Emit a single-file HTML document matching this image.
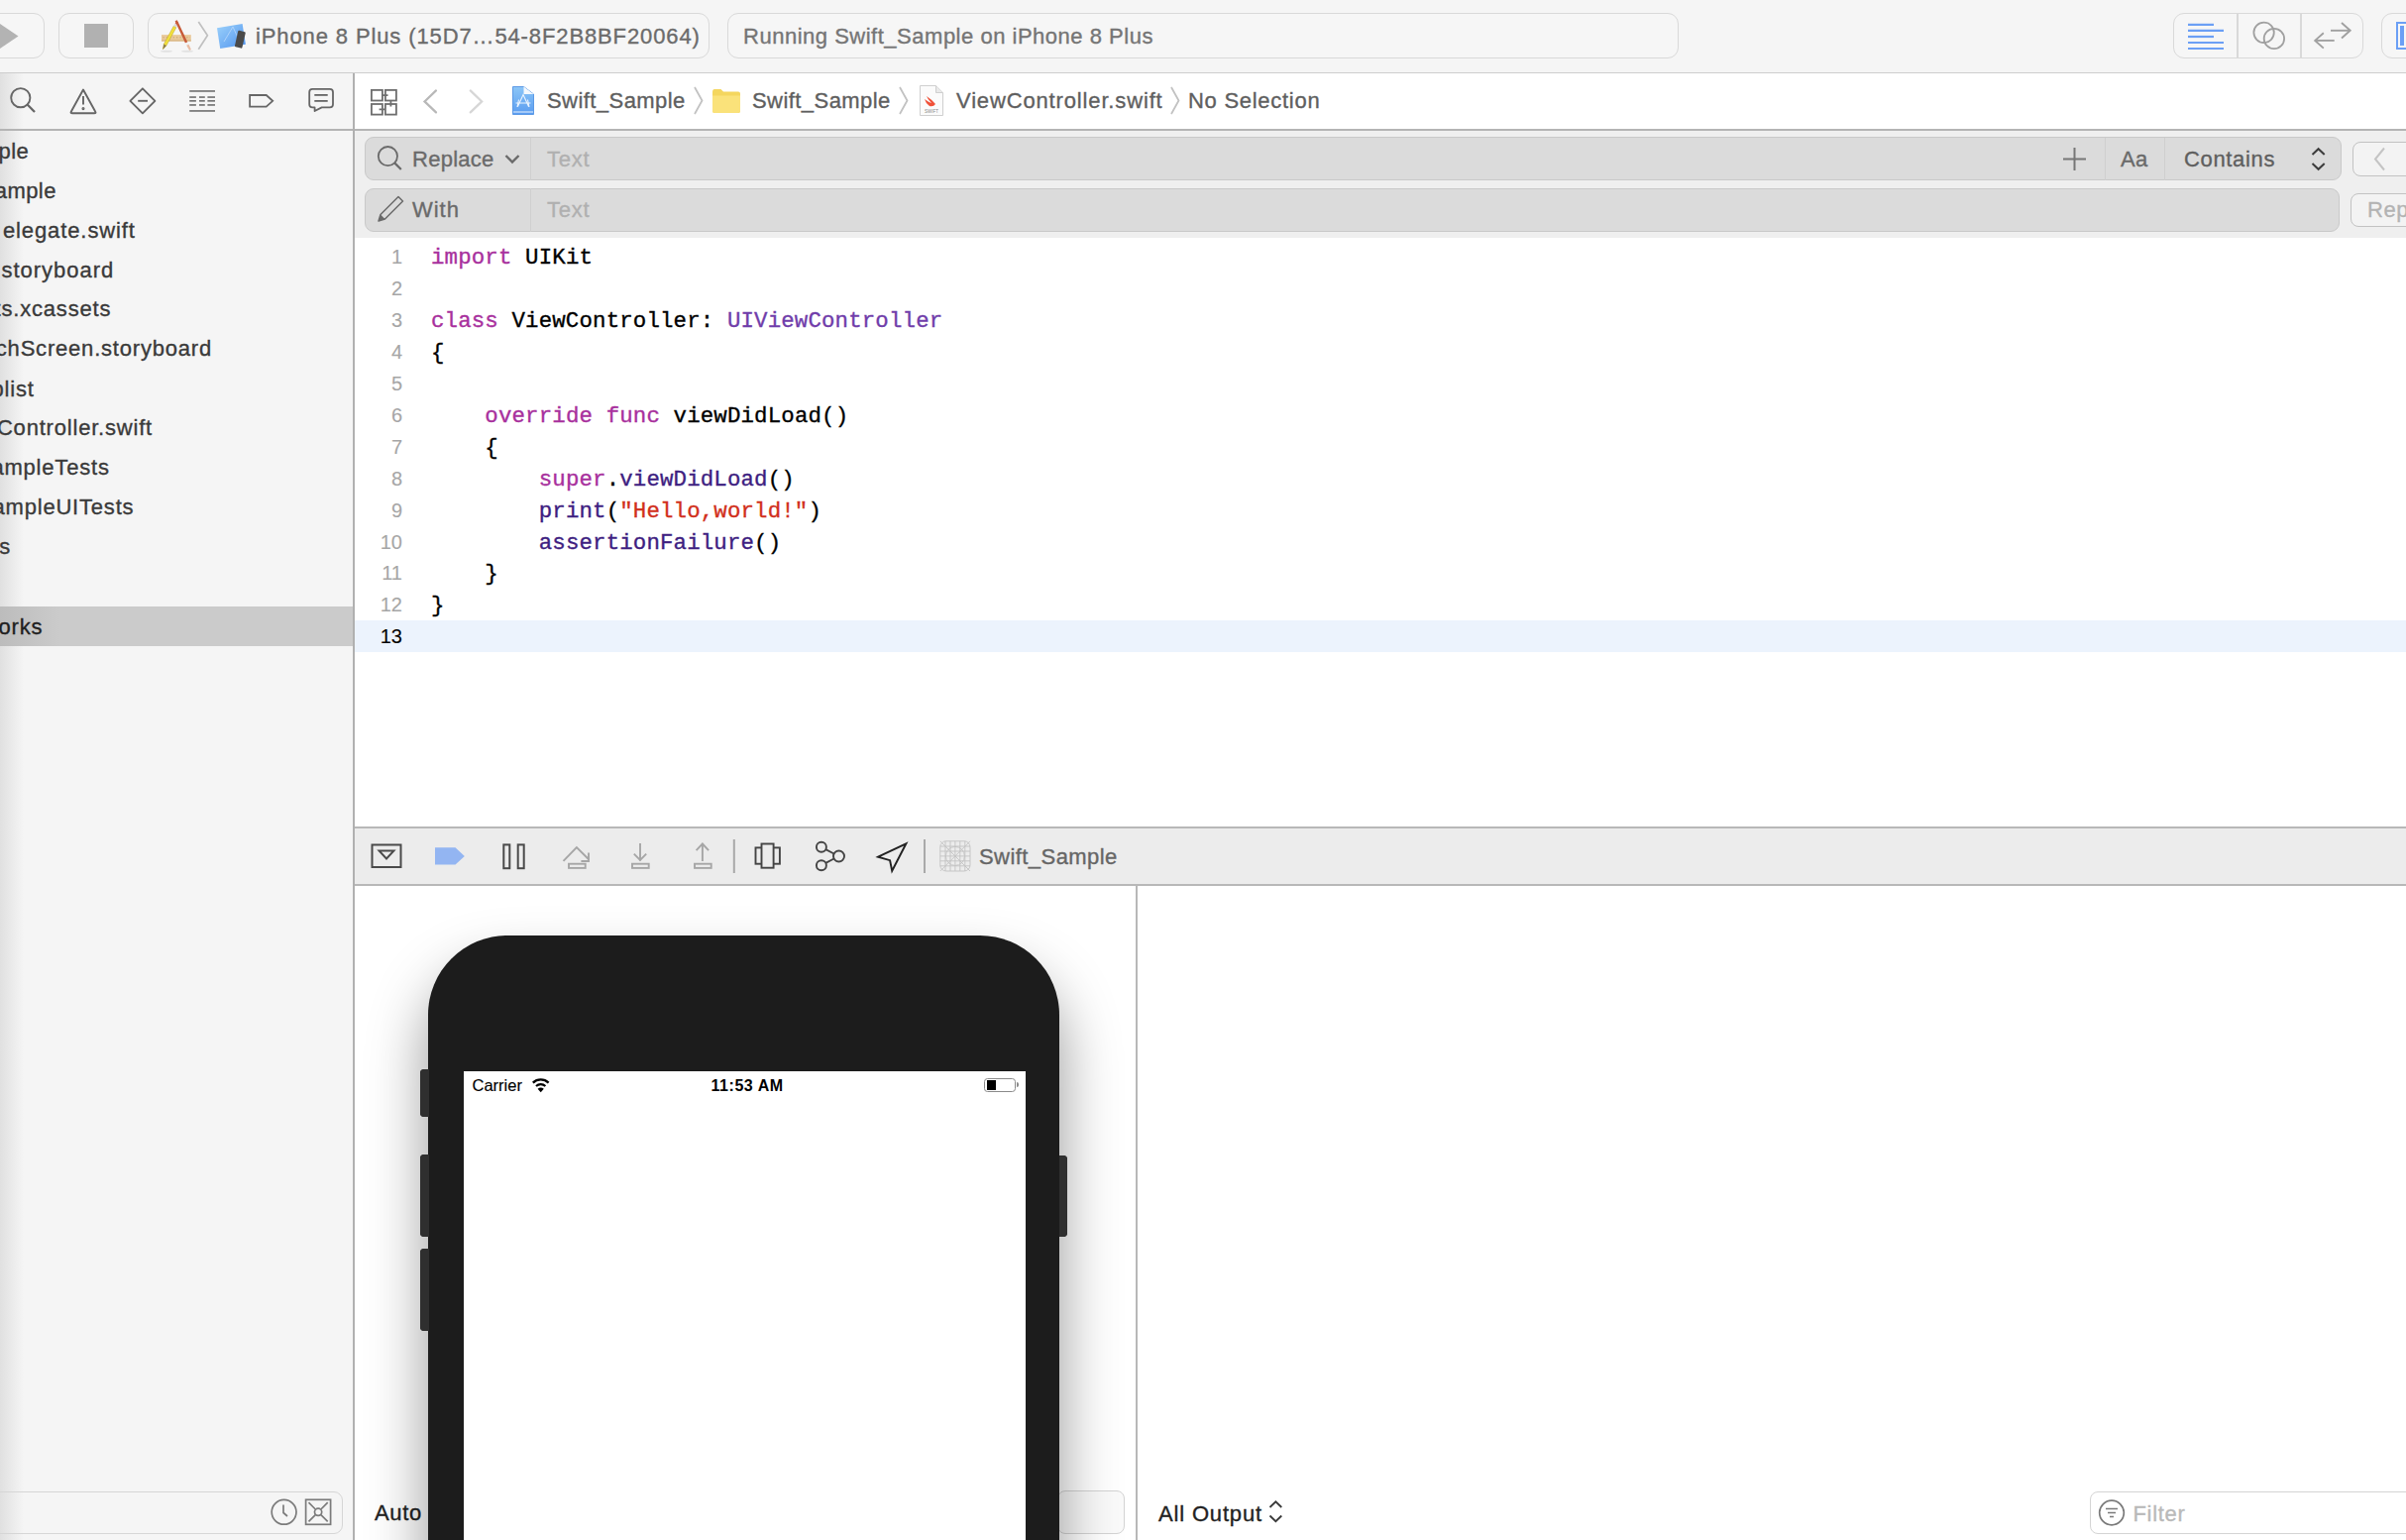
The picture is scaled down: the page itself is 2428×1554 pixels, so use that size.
<!DOCTYPE html>
<html><head><meta charset="utf-8">
<style>
*{box-sizing:border-box;margin:0;padding:0}
html,body{width:2428px;height:1554px;overflow:hidden;background:#fff;font-family:"Liberation Sans",sans-serif}
.a{position:absolute}
.t{position:absolute;white-space:pre;line-height:1;-webkit-text-stroke:0.35px currentColor}
#toolbar{left:0;top:0;width:2428px;height:74px;background:#f5f5f5;border-bottom:1px solid #cdcdcd}
.btn{position:absolute;border:1.5px solid #d9d9d9;border-radius:11px;background:#f6f6f6}
#nav{left:0;top:74px;width:357px;height:1480px;background:#f5f5f5}
#vdiv{left:356px;top:74px;width:2px;height:1480px;background:#b0b0b0}
#navbar{left:0;top:74px;width:357px;height:58px;border-bottom:2px solid #b4b4b4}
#jump{left:358px;top:74px;width:2070px;height:58px;background:#fff;border-bottom:2px solid #b4b4b4}
#find{left:358px;top:132px;width:2070px;height:108px;background:#efefef}
.fld{position:absolute;background:#dbdbdb;border:1px solid #c9c9c9;border-radius:9px}
#code{left:358px;top:240px;width:2070px;height:594px;background:#fff}
#dbg{left:358px;top:834px;width:2070px;height:60px;background:#ececec;border-top:2px solid #b8b8b8;border-bottom:2px solid #b8b8b8}
#vars{left:358px;top:894px;width:789px;height:660px;background:#fff}
#cons{left:1148px;top:894px;width:1280px;height:660px;background:#fff}
#div2{left:1146px;top:894px;width:2px;height:660px;background:#b8b8b8}
.cl{position:absolute;left:0;height:32px;font-family:"Liberation Mono",monospace;font-size:22.4px;white-space:pre;line-height:32px}
.ln{position:absolute;width:48px;left:358px;text-align:right;color:#a3a3a3;font-family:"Liberation Sans",sans-serif;font-size:21px}
.kw{color:#a8309d}.ty{color:#703daa}.fn{color:#3e1e81}.str{color:#d12f1b}
.nf{position:absolute;left:0;font-size:23px;color:#3b3b3b;white-space:pre;line-height:1}
</style></head>
<body>
<!-- TOOLBAR -->
<div id="toolbar" class="a"></div>
<div class="btn" style="left:-20px;top:13px;width:65px;height:46px"></div>
<svg class="a" style="left:0;top:24px" width="20" height="25"><path d="M0 0 L18.5 12.5 L0 25 Z" fill="#b3b3b3"/></svg>
<div class="btn" style="left:59px;top:13px;width:76px;height:46px"></div>
<div class="a" style="left:85px;top:24px;width:24px;height:24px;background:#b1b1b1"></div>
<div class="btn" style="left:149px;top:13px;width:567px;height:46px"></div>
<svg class="a" style="left:160px;top:18px" width="40" height="36">
 <rect x="3" y="17.1" width="29.8" height="6.4" fill="#e9c99b"/>
 <rect x="3" y="22.5" width="29.8" height="1" fill="#d2ad78"/>
 <path d="M4.5 19.8 H32" stroke="#c7a26e" stroke-width="1" stroke-dasharray="1.2 2.2"/>
 <path d="M4.4 31.7 L5.3 26.6 L15.3 8.2 L17.9 9.6 L7.9 28 Z" fill="#f2e03c" stroke="#b9a02a" stroke-width="0.5"/>
 <path d="M4.4 31.7 L5.3 26.6 L7.9 28 Z" fill="#8a7a50"/>
 <path d="M15.3 8.2 L16.7 5.6 L19.3 7 L17.9 9.6 Z" fill="#d9d9d9"/>
 <path d="M16.7 5.6 L17.5 4.2 Q18.8 3.4 20 4.4 L19.3 7 Z" fill="#e8534a"/>
 <path d="M16.6 3.2 L18.8 2.2 L29.3 24.4 L27 25.4 Z" fill="#c75b38"/>
 <path d="M27 25.4 L29.3 24.4 L30.5 26.8 L28.2 27.8 Z" fill="#f2f2f2"/>
 <path d="M28.2 27.8 L30.5 26.8 L32.8 31.8 Q32.3 33 31 32.8 Z" fill="#e9bda4"/>
 <ellipse cx="8" cy="33.8" rx="6" ry="1" fill="#000" opacity=".08"/>
 <ellipse cx="29" cy="33.8" rx="6" ry="1" fill="#000" opacity=".08"/>
</svg>
<svg class="a" style="left:198px;top:20px" width="14" height="32"><path d="M2.3 2 L11.4 15.8 L2.3 29.7" fill="none" stroke="#c0c0c0" stroke-width="1.7"/></svg>
<svg class="a" style="left:216px;top:20px" width="36" height="34">
 <defs><linearGradient id="gdev" x1="0" y1="0" x2="1" y2="1"><stop offset="0" stop-color="#9dd2fb"/><stop offset="1" stop-color="#4f93ee"/></linearGradient></defs>
 <path d="M3 8.3 L28.6 4.1 L31.9 24.7 L6.2 29 Z" fill="url(#gdev)"/>
 <path d="M10 22 L19 7 L24 18" fill="none" stroke="#b9d8fb" stroke-width="1" opacity=".8"/>
 <path d="M24.2 11.5 Q24.5 10.6 25.5 10.8 L31 12.2 Q32 12.5 31.7 13.5 L28.4 27.9 Q28.1 28.9 27.1 28.6 L21.7 27.3 Q20.7 27 21 26 Z" fill="#4a4a4a"/>
</svg>
<div class="t" style="left:258px;top:26px;font-size:22px;color:#6b6b6b;letter-spacing:0.88px">iPhone 8 Plus (15D7…54-8F2B8BF20064)</div>
<div class="btn" style="left:734px;top:13px;width:960px;height:46px"></div>
<div class="t" style="left:750px;top:25.5px;font-size:22px;color:#757575;letter-spacing:0.51px">Running Swift_Sample on iPhone 8 Plus</div>
<div class="btn" style="left:2193px;top:13px;width:192px;height:46px"></div>
<div class="a" style="left:2257px;top:14px;width:2px;height:44px;background:#d9d9d9"></div>
<div class="a" style="left:2321px;top:14px;width:2px;height:44px;background:#d9d9d9"></div>
<svg class="a" style="left:2200px;top:18px" width="50" height="36">
 <g stroke="#6b9ff5" stroke-width="2.2"><path d="M8 6.9 H34"/><path d="M8 12.9 H44"/><path d="M8 19 H34"/><path d="M8 25 H44"/><path d="M8 31 H44"/></g>
</svg>
<svg class="a" style="left:2265px;top:14px" width="50" height="44">
 <circle cx="19.6" cy="18.8" r="10.2" fill="none" stroke="#a0a0a0" stroke-width="1.8"/>
 <circle cx="29.9" cy="25" r="10.2" fill="none" stroke="#a0a0a0" stroke-width="1.8"/>
</svg>
<svg class="a" style="left:2328px;top:14px" width="50" height="44">
 <g fill="none" stroke="#a0a0a0" stroke-width="1.9">
 <path d="M24 16.8 H43.7"/><path d="M35 9 L43.7 16.8 L35 24.5"/>
 <path d="M8.2 26.9 H27.7"/><path d="M16.8 19.2 L8.2 26.9 L16.8 34.6"/>
 </g>
</svg>
<div class="btn" style="left:2403px;top:13px;width:60px;height:46px"></div>
<div class="a" style="left:2418px;top:22px;width:14px;height:28px;border:2.5px solid #6b9ff5"></div>
<div class="a" style="left:2422px;top:26px;width:4px;height:20px;background:#6b9ff5"></div>

<!-- NAVIGATOR -->
<div id="nav" class="a"></div>
<div class="a" style="left:0;top:74px;width:60px;height:1480px;background:linear-gradient(to right,#e0e0e0,rgba(245,245,245,0.5) 40%,rgba(245,245,245,0))"></div>
<div class="a" style="left:0;top:612px;width:357px;height:40px;background:#cbcbcb"></div>
<div class="a" style="left:0;top:612px;width:60px;height:40px;background:linear-gradient(to right,#bcbcbc,rgba(203,203,203,0))"></div>
<div id="navbar" class="a"></div>
<svg class="a" style="left:0;top:74px" width="357" height="58">
 <g fill="none" stroke="#666" stroke-width="1.9">
  <circle cx="20.8" cy="24.7" r="9.6"/><path d="M27.6 31.5 L35 39" stroke-width="2.3"/>
  <path d="M84 16.5 L96 38.2 Q97.5 40.3 95 40.3 H73.2 Q70.6 40.3 72 38.2 Z" stroke-linejoin="round"/>
  <path d="M84 23 V31.5"/><circle cx="84" cy="35.6" r="0.6" fill="#666"/>
  <path d="M143.9 15.3 L156.4 27.8 L143.9 40.3 L131.4 27.8 Z" stroke-linejoin="round"/><path d="M139.2 27.8 H149"/>
 </g>
 <g fill="#666">
  <rect x="191.2" y="17.2" width="25.8" height="1.5"/>
  <rect x="191.2" y="23.3" width="6.7" height="1.5"/><rect x="201" y="23.3" width="5.8" height="1.5"/><rect x="209.4" y="23.3" width="7.6" height="1.5"/>
  <rect x="191.2" y="27.1" width="6.7" height="1.5"/><rect x="201" y="27.1" width="5.8" height="1.5"/><rect x="209.4" y="27.1" width="7.6" height="1.5"/>
  <rect x="191.2" y="31.2" width="6.7" height="1.5"/><rect x="201" y="31.2" width="5.8" height="1.5"/><rect x="209.4" y="31.2" width="7.6" height="1.5"/>
  <rect x="191.2" y="37.2" width="25.8" height="1.5"/>
 </g>
 <g fill="none" stroke="#666" stroke-width="1.8">
  <path d="M252.1 22 H268.7 L275.2 27.8 L268.7 33.6 H252.1 Z"/>
  <path d="M315.3 15.9 H332.8 Q336 15.9 336 19 V31.2 Q336 34.4 332.8 34.4 H324.7 L317.6 38 V34.4 H315.3 Q312.2 34.4 312.2 31.2 V19 Q312.2 15.9 315.3 15.9 Z" stroke-linejoin="round"/>
  <path d="M317.3 21.9 H330.7"/><path d="M317.3 27.9 H330.7"/>
 </g>
</svg>
<div class="a" style="left:0;top:142.0px;width:29.2px;height:30px;overflow:hidden"><div class="t" style="right:0;top:0;font-size:22px;color:#3a3a3a;letter-spacing:0.44px">Swift_Sample</div></div>
<div class="a" style="left:0;top:181.6px;width:56.9px;height:30px;overflow:hidden"><div class="t" style="right:0;top:0;font-size:22px;color:#3a3a3a;letter-spacing:0.44px">Swift_Sample</div></div>
<div class="a" style="left:0;top:222.0px;width:136.9px;height:30px;overflow:hidden"><div class="t" style="right:0;top:0;font-size:22px;color:#3a3a3a;letter-spacing:0.9px">elegate.swift</div></div>
<div class="a" style="left:0;top:261.6px;width:115.2px;height:30px;overflow:hidden"><div class="t" style="right:0;top:0;font-size:22px;color:#3a3a3a;letter-spacing:0.97px">storyboard</div></div>
<div class="a" style="left:0;top:301.3px;width:112.2px;height:30px;overflow:hidden"><div class="t" style="right:0;top:0;font-size:22px;color:#3a3a3a;letter-spacing:0.8px">Assets.xcassets</div></div>
<div class="a" style="left:0;top:341.0px;width:214.0px;height:30px;overflow:hidden"><div class="t" style="right:0;top:0;font-size:22px;color:#3a3a3a;letter-spacing:0.8px">LaunchScreen.storyboard</div></div>
<div class="a" style="left:0;top:381.6px;width:34.7px;height:30px;overflow:hidden"><div class="t" style="right:0;top:0;font-size:22px;color:#3a3a3a;letter-spacing:0.8px">Info.plist</div></div>
<div class="a" style="left:0;top:421.2px;width:154.0px;height:30px;overflow:hidden"><div class="t" style="right:0;top:0;font-size:22px;color:#3a3a3a;letter-spacing:0.8px">Controller.swift</div></div>
<div class="a" style="left:0;top:460.9px;width:110.7px;height:30px;overflow:hidden"><div class="t" style="right:0;top:0;font-size:22px;color:#3a3a3a;letter-spacing:0.8px">Swift_SampleTests</div></div>
<div class="a" style="left:0;top:500.9px;width:135.4px;height:30px;overflow:hidden"><div class="t" style="right:0;top:0;font-size:22px;color:#3a3a3a;letter-spacing:0.8px">Swift_SampleUITests</div></div>
<div class="a" style="left:0;top:541.2px;width:11.1px;height:30px;overflow:hidden"><div class="t" style="right:0;top:0;font-size:22px;color:#3a3a3a;letter-spacing:0.8px">Products</div></div>
<div class="a" style="left:0;top:621.5px;width:43.3px;height:30px;overflow:hidden"><div class="t" style="right:0;top:0;font-size:22px;color:#1f1f1f;letter-spacing:0.8px">Frameworks</div></div>

<div class="a" style="left:-20px;top:1505px;width:366px;height:43px;border:1.5px solid #d6d6d6;border-radius:9px"></div>
<svg class="a" style="left:270px;top:1508px" width="70" height="36">
 <g fill="none" stroke="#7b7b7b" stroke-width="1.7">
  <circle cx="16.6" cy="17.8" r="12.4"/><path d="M16 10.5 V18.5 L20 22"/>
  <rect x="38.6" y="5.3" width="25" height="25"/>
  <circle cx="51.1" cy="17.8" r="3.6"/><path d="M41.5 8.2 L48.3 15 M60.7 8.2 L53.9 15 M41.5 27.4 L48.3 20.6 M60.7 27.4 L53.9 20.6"/>
 </g>
</svg>

<!-- EDITOR -->
<div id="jump" class="a"></div>
<svg class="a" style="left:358px;top:74px" width="1000" height="58">
 <g fill="none" stroke="#6e6e6e" stroke-width="1.8">
  <rect x="16.9" y="16.9" width="11" height="10.6"/><rect x="30.9" y="16.9" width="11" height="10.6"/>
  <rect x="16.9" y="31" width="11" height="10.6"/><rect x="30.9" y="31" width="11" height="10.6"/>
  <path d="M27.9 22.2 H33.5 M36.4 27.5 V33.5 M24.6 36.3 H30.9"/>
 </g>
 <path d="M82 17.4 L70.5 28.4 L82 39.4" fill="none" stroke="#b8b8b8" stroke-width="2.2" stroke-linecap="round"/>
 <path d="M116.7 17.4 L128.2 28.4 L116.7 39.4" fill="none" stroke="#d6d6d6" stroke-width="2.2" stroke-linecap="round"/>
</svg>
<svg class="a" style="left:514px;top:84px" width="40" height="40">
 <defs><linearGradient id="gdoc" x1="0" y1="0" x2="0" y2="1"><stop offset="0" stop-color="#8cc6f7"/><stop offset="1" stop-color="#5a9cf0"/></linearGradient></defs>
 <path d="M3.5 3.5 H14.5 L24.5 11 V31.5 H3.5 Z" fill="url(#gdoc)" stroke="#5c9ae6" stroke-width="1"/>
 <path d="M14.5 3.5 V11 H24.5 Z" fill="#f4f8fd"/>
 <path d="M8.5 23.5 L14 11.5 L19.5 23.5 M6.5 20 H21.5 M9.5 16.5 L8 24 M18.5 16.5 L20 24 M4 29 H24" fill="none" stroke="#eaf3fe" stroke-width="1.1"/>
</svg>
<div class="t" style="left:552px;top:90.5px;font-size:22px;color:#5f5f5f;letter-spacing:0.44px">Swift_Sample</div>
<svg class="a" style="left:698px;top:86px" width="14" height="32"><path d="M3 2 L10.5 15.5 L3 29" fill="none" stroke="#c2c2c2" stroke-width="1.8"/></svg>
<svg class="a" style="left:716px;top:84px" width="40" height="36">
 <path d="M3 9 Q3 6 5 6 H11.5 L14 8.5 H29 Q31 8.5 31 10.5 V28 Q31 30 29 30 H5 Q3 30 3 28 Z" fill="#f4d65e"/>
 <path d="M3 12.5 H31 V28 Q31 30 29 30 H5 Q3 30 3 28 Z" fill="#fae27a"/>
</svg>
<div class="t" style="left:759px;top:90.5px;font-size:22px;color:#5f5f5f;letter-spacing:0.44px">Swift_Sample</div>
<svg class="a" style="left:905px;top:86px" width="14" height="32"><path d="M3 2 L10.5 15.5 L3 29" fill="none" stroke="#c2c2c2" stroke-width="1.8"/></svg>
<svg class="a" style="left:925px;top:84px" width="32" height="36">
 <path d="M3.5 2.5 H19.5 L26.5 9.5 V32.5 H3.5 Z" fill="#fbfbfb" stroke="#cfcfcf" stroke-width="1"/>
 <path d="M19.5 2.5 V9.5 H26.5" fill="#eaeaea" stroke="#cfcfcf" stroke-width="1"/>
 <path d="M10 13 Q16 17 19 21 Q17 24 13 23 Q9 20 8 16 Q12 19 15 20 Q11 16 10 13 Z" fill="#f05138"/>
 <text x="15" y="30" font-size="4.5" fill="#888" text-anchor="middle" font-family="Liberation Sans">SWIFT</text>
</svg>
<div class="t" style="left:965px;top:90.5px;font-size:22px;color:#5f5f5f;letter-spacing:0.85px">ViewController.swift</div>
<svg class="a" style="left:1179px;top:86px" width="14" height="32"><path d="M3 2 L10.5 15.5 L3 29" fill="none" stroke="#c2c2c2" stroke-width="1.8"/></svg>
<div class="t" style="left:1199px;top:90.5px;font-size:22px;color:#5f5f5f;letter-spacing:0.72px">No Selection</div>

<div id="find" class="a"></div>
<div class="fld" style="left:368px;top:138px;width:1995px;height:44px"></div>
<div class="a" style="left:535px;top:139px;width:1px;height:43px;background:#cfcfcf"></div>
<div class="a" style="left:2124px;top:139px;width:1px;height:43px;background:#cfcfcf"></div>
<div class="a" style="left:2184px;top:139px;width:1px;height:43px;background:#cfcfcf"></div>
<div class="fld" style="left:368px;top:190px;width:1993px;height:44px"></div>
<div class="a" style="left:535px;top:190px;width:1px;height:44px;background:#cfcfcf"></div>
<svg class="a" style="left:368px;top:139px" width="170" height="100">
 <g fill="none" stroke="#6a6a6a" stroke-width="1.8">
  <circle cx="23.4" cy="18.6" r="9.6"/><path d="M30.2 25.4 L36.8 32" stroke-width="2.2"/>
  <path d="M142.5 18 L149 24.5 L155.5 18" stroke-width="2.4"/>
 </g>
 <g fill="none" stroke="#6a6a6a" stroke-width="1.6">
  <path d="M14 84 L16 77.5 L34 59.5 L38.5 64 L20.5 82 Z" stroke-linejoin="round" stroke-width="1.5"/>
 </g>
 <path d="M14 84 L16 77.5 L20.5 82 Z" fill="#6a6a6a"/>
</svg>
<div class="t" style="left:416px;top:150.0px;font-size:22px;color:#6a6a6a;letter-spacing:0.26px">Replace</div>
<div class="t" style="left:416px;top:201.0px;font-size:22px;color:#6a6a6a;letter-spacing:0.97px">With</div>
<div class="t" style="left:552px;top:150.0px;font-size:22px;color:#b0b0b0;letter-spacing:0.75px">Text</div>
<div class="t" style="left:552px;top:201.0px;font-size:22px;color:#b0b0b0;letter-spacing:0.75px">Text</div>
<svg class="a" style="left:2080px;top:146px" width="30" height="30"><path d="M13.5 3 V26 M2 14.5 H25" stroke="#767676" stroke-width="2"/></svg>
<div class="t" style="left:2140px;top:150.0px;font-size:22px;color:#6a6a6a;letter-spacing:0.3px">Aa</div>
<div class="t" style="left:2204px;top:150.0px;font-size:22px;color:#5f5f5f;letter-spacing:0.65px">Contains</div>
<svg class="a" style="left:2330px;top:146px" width="20" height="30"><path d="M3.5 10 L9.6 4.2 L15.7 10 M3.5 19 L9.6 24.8 L15.7 19" fill="none" stroke="#3c3c3c" stroke-width="2"/></svg>
<div class="a" style="left:2374px;top:143px;width:80px;height:35px;border:1.5px solid #c2c2c2;border-radius:8px;background:#f3f3f3"></div>
<svg class="a" style="left:2393px;top:146px" width="20" height="30"><path d="M13 3.5 L4 14.5 L13 25.5" fill="none" stroke="#c4c4c4" stroke-width="2"/></svg>
<div class="a" style="left:2372px;top:195px;width:90px;height:34px;border:1.5px solid #c2c2c2;border-radius:8px;background:#f3f3f3"></div>
<div class="t" style="left:2389px;top:201.0px;font-size:22px;color:#b3b3b3;letter-spacing:0.6px">Rep</div>
<div id="code" class="a"></div>
<div class="a" style="left:358px;top:626px;width:2070px;height:32px;background:#ecf3fd"></div>
<div class="t" style="left:358px;width:48px;text-align:right;top:248.9px;font-size:20px;color:#a6a6a6;-webkit-text-stroke:0.1px currentColor">1</div>
<div class="t" style="left:435px;top:248.9px;font-family:'Liberation Mono',monospace;font-size:22.4px;letter-spacing:0.15px;color:#000"><span class="kw">import</span> UIKit</div>
<div class="t" style="left:358px;width:48px;text-align:right;top:280.8px;font-size:20px;color:#a6a6a6;-webkit-text-stroke:0.1px currentColor">2</div>
<div class="t" style="left:358px;width:48px;text-align:right;top:312.8px;font-size:20px;color:#a6a6a6;-webkit-text-stroke:0.1px currentColor">3</div>
<div class="t" style="left:435px;top:312.8px;font-family:'Liberation Mono',monospace;font-size:22.4px;letter-spacing:0.15px;color:#000"><span class="kw">class</span> ViewController: <span class="ty">UIViewController</span></div>
<div class="t" style="left:358px;width:48px;text-align:right;top:344.8px;font-size:20px;color:#a6a6a6;-webkit-text-stroke:0.1px currentColor">4</div>
<div class="t" style="left:435px;top:344.8px;font-family:'Liberation Mono',monospace;font-size:22.4px;letter-spacing:0.15px;color:#000">{</div>
<div class="t" style="left:358px;width:48px;text-align:right;top:376.7px;font-size:20px;color:#a6a6a6;-webkit-text-stroke:0.1px currentColor">5</div>
<div class="t" style="left:358px;width:48px;text-align:right;top:408.6px;font-size:20px;color:#a6a6a6;-webkit-text-stroke:0.1px currentColor">6</div>
<div class="t" style="left:435px;top:408.6px;font-family:'Liberation Mono',monospace;font-size:22.4px;letter-spacing:0.15px;color:#000">    <span class="kw">override</span> <span class="kw">func</span> viewDidLoad()</div>
<div class="t" style="left:358px;width:48px;text-align:right;top:440.6px;font-size:20px;color:#a6a6a6;-webkit-text-stroke:0.1px currentColor">7</div>
<div class="t" style="left:435px;top:440.6px;font-family:'Liberation Mono',monospace;font-size:22.4px;letter-spacing:0.15px;color:#000">    {</div>
<div class="t" style="left:358px;width:48px;text-align:right;top:472.5px;font-size:20px;color:#a6a6a6;-webkit-text-stroke:0.1px currentColor">8</div>
<div class="t" style="left:435px;top:472.5px;font-family:'Liberation Mono',monospace;font-size:22.4px;letter-spacing:0.15px;color:#000">        <span class="kw">super</span>.<span class="fn">viewDidLoad</span>()</div>
<div class="t" style="left:358px;width:48px;text-align:right;top:504.5px;font-size:20px;color:#a6a6a6;-webkit-text-stroke:0.1px currentColor">9</div>
<div class="t" style="left:435px;top:504.5px;font-family:'Liberation Mono',monospace;font-size:22.4px;letter-spacing:0.15px;color:#000">        <span class="fn">print</span>(<span class="str">"Hello,world!"</span>)</div>
<div class="t" style="left:358px;width:48px;text-align:right;top:536.5px;font-size:20px;color:#a6a6a6;-webkit-text-stroke:0.1px currentColor">10</div>
<div class="t" style="left:435px;top:536.5px;font-family:'Liberation Mono',monospace;font-size:22.4px;letter-spacing:0.15px;color:#000">        <span class="fn">assertionFailure</span>()</div>
<div class="t" style="left:358px;width:48px;text-align:right;top:568.4px;font-size:20px;color:#a6a6a6;-webkit-text-stroke:0.1px currentColor">11</div>
<div class="t" style="left:435px;top:568.4px;font-family:'Liberation Mono',monospace;font-size:22.4px;letter-spacing:0.15px;color:#000">    }</div>
<div class="t" style="left:358px;width:48px;text-align:right;top:600.3px;font-size:20px;color:#a6a6a6;-webkit-text-stroke:0.1px currentColor">12</div>
<div class="t" style="left:435px;top:600.3px;font-family:'Liberation Mono',monospace;font-size:22.4px;letter-spacing:0.15px;color:#000">}</div>
<div class="t" style="left:358px;width:48px;text-align:right;top:632.3px;font-size:20px;color:#000;-webkit-text-stroke:0.1px currentColor">13</div>
<div id="dbg" class="a"></div>
<svg class="a" style="left:358px;top:834px" width="800" height="60">
 <g fill="none" stroke="#4a4a4a" stroke-width="2">
  <rect x="17.5" y="18.5" width="29" height="22.5"/>
  <path d="M24.5 24.5 H39.5 L32 32.5 Z" stroke-linejoin="miter" stroke-width="1.9"/>
 </g>
 <path d="M81 21.2 H101.5 L110.8 29.9 L101.5 38.6 H81 Z" fill="#93b5f2"/>
 <g fill="none" stroke="#4a4a4a" stroke-width="2"><rect x="150.3" y="18.4" width="6" height="23.8"/><rect x="164.7" y="18.4" width="6" height="23.8"/></g>
 <g fill="none" stroke="#a6a6a6" stroke-width="1.9">
  <path d="M210.5 34.9 L223.9 21 L235.9 33"/><path d="M236 26.5 V35 H228.4" stroke-linejoin="miter"/>
  <rect x="216" y="37.7" width="16.7" height="4.2"/>
  <path d="M288 17 V34.5"/><path d="M281.8 27.7 L288 34 L294.2 27.7"/>
  <rect x="280" y="37.7" width="16.7" height="4.2"/>
  <path d="M350.9 17.5 V35"/><path d="M344.6 24.1 L350.9 17.5 L357.1 24.1"/>
  <rect x="343" y="37.7" width="16.7" height="4.2"/>
 </g>
 <rect x="381.8" y="13" width="2" height="34" fill="#a9a9a9"/>
 <g fill="none" stroke="#444" stroke-width="1.9">
  <rect x="404.5" y="21.4" width="24.4" height="16.3"/>
  <rect x="410.5" y="17.5" width="12.1" height="24.2" fill="#ececec"/>
  <circle cx="470.9" cy="20.8" r="5"/><circle cx="488.5" cy="30" r="5.5"/><circle cx="470.9" cy="39.2" r="5"/>
  <path d="M475.3 23.2 L483.6 27.5 M475.3 36.8 L483.6 32.5"/>
 </g>
 <path d="M528.1 30.7 L556.4 17.3 L542.2 44.8 L540.1 34.2 Z" fill="none" stroke="#222" stroke-width="1.9" stroke-linejoin="miter"/>
 <rect x="574" y="13" width="2" height="34" fill="#a9a9a9"/>
 <g fill="none" stroke="#c3c3c3" stroke-width="0.9">
  <rect x="590.8" y="14.8" width="30.2" height="30.2" rx="6"/>
  <path d="M596 14.8 V45 M601 14.8 V45 M605.9 14.8 V45 M610.8 14.8 V45 M615.8 14.8 V45 M590.8 20 H621 M590.8 25 H621 M590.8 29.9 H621 M590.8 34.8 H621 M590.8 39.8 H621 M590.8 14.8 L621 45 M621 14.8 L590.8 45"/>
  <circle cx="605.9" cy="29.9" r="9.5"/>
 </g>
</svg>
<div class="t" style="left:988px;top:853.5px;font-size:22px;color:#666;letter-spacing:0.44px">Swift_Sample</div>

<div id="vars" class="a"></div>
<div id="cons" class="a"></div>
<div class="a" style="left:1067px;top:1504px;width:68px;height:44px;border:1.5px solid #d4d4d4;border-radius:8px;background:#fafafa"></div>
<div class="t" style="left:378px;top:1515.5px;font-size:22px;color:#222;letter-spacing:0.7px">Auto</div>
<!-- phone -->
<div class="a" style="left:424px;top:1079px;width:14px;height:48px;background:#2f2f2f;border-radius:4px 0 0 4px"></div>
<div class="a" style="left:424px;top:1165px;width:14px;height:83px;background:#2f2f2f;border-radius:4px 0 0 4px"></div>
<div class="a" style="left:424px;top:1260px;width:14px;height:83px;background:#2f2f2f;border-radius:4px 0 0 4px"></div>
<div class="a" style="left:1063px;top:1166px;width:14px;height:82px;background:#2f2f2f;border-radius:0 4px 4px 0"></div>
<div class="a" style="left:432px;top:944px;width:637px;height:700px;background:#1c1c1c;border-radius:80px 80px 0 0;box-shadow:0 36px 60px rgba(0,0,0,.42)"></div>
<div class="a" style="left:424px;top:1079px;width:9px;height:48px;background:#2f2f2f;border-radius:4px 0 0 4px"></div>
<div class="a" style="left:424px;top:1165px;width:9px;height:83px;background:#2f2f2f;border-radius:4px 0 0 4px"></div>
<div class="a" style="left:424px;top:1260px;width:9px;height:83px;background:#2f2f2f;border-radius:4px 0 0 4px"></div>
<div class="a" style="left:1069px;top:1166px;width:8px;height:82px;background:#2f2f2f;border-radius:0 4px 4px 0"></div>
<div class="a" style="left:468px;top:1081px;width:567px;height:600px;background:#fff"></div>
<div class="t" style="left:476.5px;top:1086.5px;font-size:16.5px;color:#000;-webkit-text-stroke:0.15px #000">Carrier</div>
<svg class="a" style="left:536px;top:1087px" width="21" height="16"><g fill="none" stroke="#000" stroke-width="2.3"><path d="M1.8 5.6 A11.5 11.5 0 0 1 17.6 5.6"/><path d="M5 9 A7 7 0 0 1 14.4 9"/></g><path d="M9.7 15.2 L6.6 11.8 A4.6 4.6 0 0 1 12.8 11.8 Z" fill="#000"/></svg>
<div class="t" style="left:717.5px;top:1087.5px;font-size:16px;font-weight:bold;color:#000;letter-spacing:0.55px;-webkit-text-stroke:0">11:53 AM</div>
<div class="a" style="left:992.5px;top:1087.5px;width:32px;height:14px;border:1.3px solid #8a8a8a;border-radius:3.5px"></div>
<div class="a" style="left:995.5px;top:1090px;width:9.5px;height:9.5px;background:#000"></div>
<div class="a" style="left:1025.5px;top:1092px;width:2px;height:5px;background:#8a8a8a;border-radius:0 2px 2px 0"></div>

<div class="t" style="left:1169px;top:1516.5px;font-size:22px;color:#222;letter-spacing:0.83px">All Output</div>
<svg class="a" style="left:1278px;top:1512px" width="20" height="28"><path d="M3.5 9 L9.4 3.3 L15.3 9 M3.5 17.5 L9.4 23.2 L15.3 17.5" fill="none" stroke="#3a3a3a" stroke-width="1.9"/></svg>
<div class="a" style="left:2109px;top:1505px;width:360px;height:43px;border:1.5px solid #d4d4d4;border-radius:8px;background:#fff"></div>
<svg class="a" style="left:2116px;top:1511px" width="32" height="32"><circle cx="15" cy="15.5" r="12.3" fill="none" stroke="#7a7a7a" stroke-width="1.7"/><path d="M9 11.5 H21 M11 15.5 H19 M13 19.5 H17" stroke="#7a7a7a" stroke-width="1.7"/></svg>
<div class="t" style="left:2152.5px;top:1517.0px;font-size:22px;color:#b9b9b9;letter-spacing:0.67px">Filter</div>
<div id="vdiv" class="a"></div>
<div id="div2" class="a"></div>
</body></html>
